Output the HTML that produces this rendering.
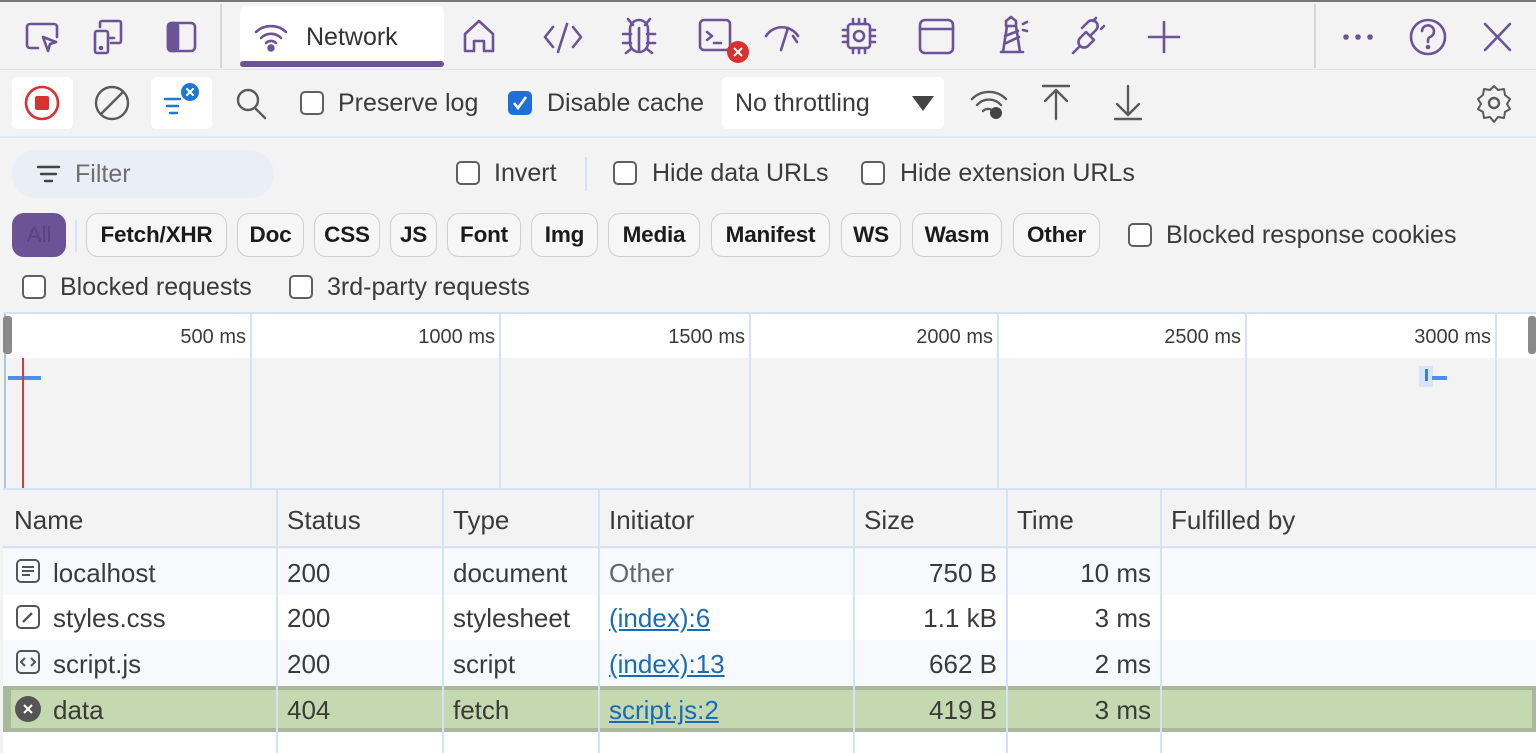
<!DOCTYPE html>
<html><head><meta charset="utf-8"><style>
*{box-sizing:border-box;margin:0;padding:0}
body{width:1536px;height:753px;overflow:hidden;background:#f3f3f3;font-family:"Liberation Sans",sans-serif;color:#3b3b3b;position:relative;font-size:25px}
.a{position:absolute;white-space:nowrap}
.cb{position:absolute;width:24px;height:24px;border:2px solid #5f5f5f;border-radius:5px;background:#fff}
.chip{position:absolute;top:213px;height:44px;border:1.5px solid #cfcfcf;border-radius:12px;background:#f6f6f6;font-weight:bold;font-size:22.5px;color:#1b1b1b;text-align:center;line-height:42px;letter-spacing:-0.2px}
.vl{position:absolute;width:2px;background:#d2e2f7}
.t{position:absolute;font-size:25px;color:#3b3b3b;white-space:nowrap}
.g{font-size:26px}
.r{text-align:right}
a{color:#1a6bb5;text-decoration:underline}
svg{position:absolute}
</style></head><body>
<!-- top bar -->
<div class="a" style="left:0;top:0;width:1536px;height:2px;background:#777"></div>
<div class="a" style="left:0;top:2px;width:1536px;height:68px;background:#f3f3f3;border-bottom:1.5px solid #e2e2e2"></div>
<div class="a" style="left:220px;top:4px;width:2px;height:64px;background:#d6d6d6"></div>
<div class="a" style="left:1314px;top:4px;width:2px;height:64px;background:#d6d6d6"></div>
<div class="a" style="left:240px;top:6px;width:204px;height:61px;background:#fff;border-radius:6px 6px 0 0"></div>
<div class="a" style="left:240px;top:61px;width:204px;height:6px;background:#6c5397;border-radius:3px"></div>
<div class="a" style="left:306px;top:23px;font-size:25px;color:#333">Network</div>
<svg width="1536" height="70" style="left:0;top:0" fill="none" stroke="#6c5397" stroke-width="2.6" stroke-linecap="round" stroke-linejoin="round">
 <path d="M38 48h-8a3 3 0 0 1-3-3V27a3 3 0 0 1 3-3h24a3 3 0 0 1 3 3v10"/><path d="M43 37l13 5-6 2-2 7z"/>
 <rect x="95" y="31" width="13" height="22" rx="2"/><path d="M100 27v-4a2 2 0 0 1 2-2h17a2 2 0 0 1 2 2v18a2 2 0 0 1-2 2h-8"/><path d="M110 38h4"/><circle cx="101" cy="48" r="1" fill="#6c5397"/>
 <rect x="168" y="23" width="27" height="28" rx="4"/><rect x="168" y="23" width="10" height="28" rx="3" fill="#6c5397"/>
 <path d="M256 32a22 22 0 0 1 30 0"/><path d="M261 38a14 14 0 0 1 20 0"/><path d="M266 43a7 7 0 0 1 10 0"/><circle cx="271" cy="48" r="2.4" fill="#6c5397"/>
 <path d="M465 51V34l14-13 14 13v17h-9v-10h-10v10z"/>
 <path d="M553 27l-8 10 8 10M573 27l8 10-8 10M567 24l-9 28"/>
 <path d="M630 29a9 9 0 0 1 18 0v14a9 9 0 0 1-18 0zM631 34h-8M647 34h8M631 43h-8M647 43h8M633 25l-5-6M645 25l5-6M631 49l-5 4M647 49l5 4M639 28v22"/>
 <rect x="700" y="20" width="30" height="30" rx="4"/><path d="M707 32l5 4-5 4M714 43h7"/>
 <path d="M766 36a19 19 0 0 1 32 0"/><path d="M788 28l-7 22"/><path d="M793 36l4 6"/>
 <rect x="848" y="24" width="22" height="24" rx="3"/><circle cx="859" cy="36" r="5"/><path d="M853 19v5M859 19v5M865 19v5M853 48v5M859 48v5M865 48v5M843 30h5M843 36h5M843 42h5M870 30h5M870 36h5M870 42h5"/>
 <rect x="920" y="20" width="33" height="33" rx="5"/><path d="M920 29h33"/>
 <path d="M1003 52l4-26h9l4 26zM1006 26v-5l5-4 5 4v5M1004 44l15-7M1005 36l13-5M1023 24l4-2M1023 30l4 1M1001 52h22"/>
 <path d="M1073 53l7-7M1080 46a6 6 0 0 1 0-8l6-6 8 8-6 6a6 6 0 0 1-8 0zM1090 36l6-6a5 5 0 0 0-8-8l-6 6M1093 21l3-3M1101 29l3-3"/>
 <path d="M1164 22v30M1149 37h30"/>
 <circle cx="1346" cy="37" r="1.5" fill="#6c5397"/><circle cx="1358" cy="37" r="1.5" fill="#6c5397"/><circle cx="1370" cy="37" r="1.5" fill="#6c5397"/>
 <circle cx="1428" cy="37" r="17"/><path d="M1422 31a6 6 0 1 1 8 6c-2 1-2 2-2 5"/><circle cx="1428" cy="47" r="1" fill="#6c5397"/>
 <path d="M1485 24l25 26M1510 24l-25 26"/>
</svg>
<svg width="24" height="24" style="left:726px;top:40px"><circle cx="12" cy="12" r="11" fill="#d9312f"/><path d="M8 8l8 8M16 8l-8 8" stroke="#fff" stroke-width="2"/></svg>

<!-- toolbar -->
<div class="a" style="left:0;top:136px;width:1536px;height:2px;background:#dbe6f6"></div>
<div class="a" style="left:12px;top:77px;width:61px;height:52px;background:#fff;border-radius:5px"></div>
<div class="a" style="left:151px;top:77px;width:61px;height:52px;background:#fff;border-radius:5px"></div>
<div class="a" style="left:722px;top:77px;width:222px;height:52px;background:#fff;border-radius:5px"></div>
<svg width="1536" height="70" style="left:0;top:68px" fill="none" stroke="#5a5a5a" stroke-width="2.4" stroke-linecap="round" stroke-linejoin="round">
 <circle cx="42" cy="35" r="16" stroke="#d9312f" stroke-width="2.6"/><rect x="35" y="28" width="14" height="14" rx="2" fill="#d9312f" stroke="none"/>
 <circle cx="112" cy="35" r="16"/><path d="M101 46l22-22"/>
 <path d="M165 31h15M167 38h11M170 45h7" stroke="#1f78d1"/>
 <circle cx="190" cy="24" r="9" fill="#1f78d1" stroke="none"/><path d="M187 21l6 6M193 21l-6 6" stroke="#fff" stroke-width="2"/>
 <circle cx="248" cy="32" r="10"/><path d="M255 40l10 10"/>
 <path d="M972 31a24 24 0 0 1 34 0M977 37a16 16 0 0 1 24 0M983 43a7 7 0 0 1 10 0"/><circle cx="996" cy="45" r="6" fill="#444" stroke="none"/>
 <path d="M1043 18h26M1056 22v29M1045 33l11-11 11 11"/>
 <path d="M1115 51h26M1128 18v29M1117 36l11 11 11-11"/>
 <circle cx="1494" cy="35" r="5"/><path d="M1494 18l4 4 6-1 1 6 5 4-3 5 3 5-5 3-1 6-6-1-4 5-4-5-6 1-1-6-5-3 3-5-3-5 5-4 1-6 6 1z" stroke-width="2"/>
</svg>
<div class="cb" style="left:300px;top:91px"></div>
<div class="t" style="left:338px;top:89px">Preserve log</div>
<div class="cb" style="left:508px;top:91px;background:#1f6fd8;border-color:#1f6fd8"></div>
<svg width="24" height="24" style="left:508px;top:91px"><path d="M6 12l4 5 8-11" stroke="#fff" stroke-width="2.6" fill="none"/></svg>
<div class="t" style="left:547px;top:89px">Disable cache</div>
<div class="t" style="left:735px;top:89px">No throttling</div>
<svg width="24" height="20" style="left:911px;top:94px"><path d="M1 2h22L12 17z" fill="#444"/></svg>

<!-- filter -->
<div class="a" style="left:12px;top:150px;width:262px;height:48px;background:#e9eef7;border-radius:24px"></div>
<svg width="30" height="24" style="left:35px;top:163px" stroke="#444" stroke-width="2.4" stroke-linecap="round"><path d="M3 4h21M6 11h15M10 18h7"/></svg>
<div class="t" style="left:75px;top:160px;color:#6e6e6e">Filter</div>
<div class="cb" style="left:456px;top:161px"></div><div class="t" style="left:494px;top:159px">Invert</div>
<div class="a" style="left:585px;top:157px;width:2px;height:34px;background:#d2e2f7"></div>
<div class="cb" style="left:613px;top:161px"></div><div class="t" style="left:652px;top:159px">Hide data URLs</div>
<div class="cb" style="left:861px;top:161px"></div><div class="t" style="left:900px;top:159px">Hide extension URLs</div>

<div class="chip" style="left:12px;width:54px;background:#6c5397;border-color:#6c5397;color:#5a4285;font-weight:normal">All</div>
<div class="a" style="left:75px;top:220px;width:2px;height:32px;background:#d2e2f7"></div>
<div class="chip" style="left:86px;width:141px">Fetch/XHR</div>
<div class="chip" style="left:237px;width:67px">Doc</div>
<div class="chip" style="left:314px;width:66px">CSS</div>
<div class="chip" style="left:390px;width:47px">JS</div>
<div class="chip" style="left:447px;width:74px">Font</div>
<div class="chip" style="left:531px;width:67px">Img</div>
<div class="chip" style="left:608px;width:92px">Media</div>
<div class="chip" style="left:711px;width:119px">Manifest</div>
<div class="chip" style="left:841px;width:60px">WS</div>
<div class="chip" style="left:912px;width:90px">Wasm</div>
<div class="chip" style="left:1013px;width:87px">Other</div>
<div class="cb" style="left:1128px;top:223px"></div><div class="t" style="left:1166px;top:221px">Blocked response cookies</div>
<div class="cb" style="left:22px;top:275px"></div><div class="t" style="left:60px;top:273px">Blocked requests</div>
<div class="cb" style="left:289px;top:275px"></div><div class="t" style="left:327px;top:273px">3rd-party requests</div>

<!-- timeline -->
<div class="a" style="left:3px;top:312px;width:1533px;height:178px;background:#f3f3f3;border-top:2px solid #d2e2f7;border-bottom:2px solid #d2e2f7"></div>
<div class="a" style="left:3px;top:314px;width:1533px;height:44px;background:#fff"></div>
<div class="vl" style="left:4px;top:314px;height:174px;background:#a9c6ef"></div>
<div class="vl" style="left:250px;top:314px;height:174px"></div>
<div class="vl" style="left:499px;top:314px;height:174px"></div>
<div class="vl" style="left:749px;top:314px;height:174px"></div>
<div class="vl" style="left:997px;top:314px;height:174px"></div>
<div class="vl" style="left:1245px;top:314px;height:174px"></div>
<div class="vl" style="left:1495px;top:314px;height:174px"></div>
<div class="a" style="left:3px;top:316px;width:9px;height:38px;background:#8a8a8a;border-radius:3px"></div>
<div class="a" style="left:1528px;top:316px;width:8px;height:38px;background:#8a8a8a;border-radius:3px"></div>
<div class="t r" style="left:100px;width:146px;top:326px;font-size:20px">500 ms</div>
<div class="t r" style="left:340px;width:155px;top:326px;font-size:20px">1000 ms</div>
<div class="t r" style="left:590px;width:155px;top:326px;font-size:20px">1500 ms</div>
<div class="t r" style="left:838px;width:155px;top:326px;font-size:20px">2000 ms</div>
<div class="t r" style="left:1086px;width:155px;top:326px;font-size:20px">2500 ms</div>
<div class="t r" style="left:1336px;width:155px;top:326px;font-size:20px">3000 ms</div>
<div class="a" style="left:8px;top:376px;width:33px;height:4px;background:#4a8fe8"></div>
<div class="a" style="left:22px;top:358px;width:2px;height:130px;background:#d33c3c"></div>
<div class="a" style="left:1419px;top:366px;width:14px;height:21px;background:#d6e5fb"></div>
<div class="a" style="left:1425px;top:369px;width:3px;height:12px;background:#3c7fd8"></div>
<div class="a" style="left:1432px;top:376px;width:15px;height:4px;background:#4a8fe8"></div>

<!-- table -->
<div class="a" style="left:3px;top:490px;width:1533px;height:58px;background:#f3f3f3;border-bottom:2px solid #d2e2f7"></div>
<div class="a" style="left:3px;top:549px;width:1533px;height:46px;background:#f7f9fd"></div>
<div class="a" style="left:3px;top:595px;width:1533px;height:45px;background:#fff"></div>
<div class="a" style="left:3px;top:640px;width:1533px;height:46px;background:#f7f9fd"></div>
<div class="a" style="left:3px;top:686px;width:1533px;height:46px;background:#c5d9b0;border:4px solid #a9b89a;border-left-width:8px"></div>
<div class="a" style="left:3px;top:732px;width:1533px;height:21px;background:#fff"></div>
<div class="vl" style="left:276px;top:490px;height:263px"></div>
<div class="vl" style="left:442px;top:490px;height:263px"></div>
<div class="vl" style="left:598px;top:490px;height:263px"></div>
<div class="vl" style="left:853px;top:490px;height:263px"></div>
<div class="vl" style="left:1006px;top:490px;height:263px"></div>
<div class="vl" style="left:1160px;top:490px;height:263px"></div>
<div class="t g" style="left:14px;top:505px">Name</div>
<div class="t g" style="left:287px;top:505px">Status</div>
<div class="t g" style="left:453px;top:505px">Type</div>
<div class="t g" style="left:609px;top:505px">Initiator</div>
<div class="t g" style="left:864px;top:505px">Size</div>
<div class="t g" style="left:1017px;top:505px">Time</div>
<div class="t g" style="left:1171px;top:505px">Fulfilled by</div>

<svg width="30" height="170" style="left:14px;top:557px" fill="none" stroke="#555" stroke-width="2">
 <rect x="3" y="3" width="22" height="22" rx="4"/><path d="M8 10h12M8 14h12M8 18h8"/>
 <rect x="3" y="49" width="22" height="22" rx="4"/><path d="M9 65l9-9" stroke-width="2.4"/>
 <rect x="3" y="94" width="22" height="22" rx="4"/><path d="M11 101l-4 4 4 4M17 101l4 4-4 4"/>
 <circle cx="14" cy="152" r="13" fill="#555" stroke="none"/><path d="M10 148l8 8M18 148l-8 8" stroke="#fff"/>
</svg>
<div class="t g" style="left:53px;top:558px">localhost</div>
<div class="t g" style="left:287px;top:558px">200</div>
<div class="t g" style="left:453px;top:558px">document</div>
<div class="t g" style="left:609px;top:558px;color:#666">Other</div>
<div class="t g r" style="left:860px;width:137px;top:558px">750 B</div>
<div class="t g r" style="left:1010px;width:141px;top:558px">10 ms</div>

<div class="t g" style="left:53px;top:603px">styles.css</div>
<div class="t g" style="left:287px;top:603px">200</div>
<div class="t g" style="left:453px;top:603px">stylesheet</div>
<div class="t g" style="left:609px;top:603px"><a>(index):6</a></div>
<div class="t g r" style="left:860px;width:137px;top:603px">1.1 kB</div>
<div class="t g r" style="left:1010px;width:141px;top:603px">3 ms</div>

<div class="t g" style="left:53px;top:649px">script.js</div>
<div class="t g" style="left:287px;top:649px">200</div>
<div class="t g" style="left:453px;top:649px">script</div>
<div class="t g" style="left:609px;top:649px"><a>(index):13</a></div>
<div class="t g r" style="left:860px;width:137px;top:649px">662 B</div>
<div class="t g r" style="left:1010px;width:141px;top:649px">2 ms</div>

<div class="t g" style="left:53px;top:695px">data</div>
<div class="t g" style="left:287px;top:695px">404</div>
<div class="t g" style="left:453px;top:695px">fetch</div>
<div class="t g" style="left:609px;top:695px"><a>script.js:2</a></div>
<div class="t g r" style="left:860px;width:137px;top:695px">419 B</div>
<div class="t g r" style="left:1010px;width:141px;top:695px">3 ms</div>
</body></html>
